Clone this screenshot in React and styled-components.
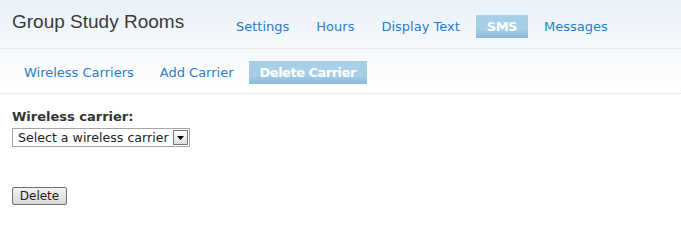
import styled, { createGlobalStyle } from "styled-components";

const GlobalStyle = createGlobalStyle`
  body {
    margin: 0;
    background: #fff;
    font-family: "DejaVu Sans", Verdana, sans-serif;
  }
`;

const topLinks = ["Settings", "Hours", "Display Text", "SMS", "Messages"];
const subLinks = ["Wireless Carriers", "Add Carrier", "Delete Carrier"];

const App = () => {
  return (
    <>
      <GlobalStyle />
      <Header>
        <Title>Group Study Rooms</Title>
        <TopNav>
          {topLinks.map((l) => (
            <Tab key={l} $active={l === "SMS"}>
              {l}
            </Tab>
          ))}
        </TopNav>
      </Header>
      <SubNav>
        {subLinks.map((l) => (
          <Tab key={l} $active={l === "Delete Carrier"}>
            {l}
          </Tab>
        ))}
      </SubNav>
      <Form>
        <Label>Wireless carrier:</Label>
        <SelectBox>
          <span>Select a wireless carrier</span>
          <Arrow>
            <svg width="7" height="4" viewBox="0 0 7 4">
              <path d="M0 0h7L3.5 4z" fill="#000" />
            </svg>
          </Arrow>
        </SelectBox>
        <Button>Delete</Button>
      </Form>
    </>
  );
};

export default App;

const Header = styled.div`
  height: 48px;
  display: flex;
  align-items: flex-start;
  padding-left: 12px;
  background: linear-gradient(#e8f0f8, #f6f9fc);
  border-bottom: 1px solid #e3eaf1;
`;

const Title = styled.h1`
  margin: 11px 0 0;
  font-family: "Liberation Sans", Arial, sans-serif;
  font-weight: normal;
  font-size: 19px;
  color: #3a3a3a;
  width: 210px;
`;

const TopNav = styled.div`
  display: flex;
  gap: 5px;
  margin-top: 15px;
  margin-left: 3px;
`;

const Tab = styled.span`
  display: inline-block;
  height: 23px;
  line-height: 23px;
  padding: 0 11px;
  font-size: 13px;
  color: ${(p) => (p.$active ? "#fff" : "#2a7ccc")};
  font-weight: ${(p) => (p.$active ? "bold" : "normal")};
  letter-spacing: ${(p) => (p.$active ? "-0.5px" : "0")};
  background: ${(p) =>
    p.$active ? "linear-gradient(#a7cfe8 60%, #88bade)" : "transparent"};
`;

const SubNav = styled.div`
  height: 45px;
  display: flex;
  align-items: flex-start;
  gap: 4px;
  padding: 12px 0 0 13px;
  box-sizing: border-box;
  background: linear-gradient(#f6f9fc, #fff);
  border-bottom: 1px solid #e8eef3;
`;

const Form = styled.div`
  padding: 14px 12px;
  display: flex;
  flex-direction: column;
  align-items: flex-start;
`;

const Label = styled.div`
  font-size: 13px;
  font-weight: bold;
  color: #333;
  line-height: 17px;
`;

const SelectBox = styled.div`
  margin-top: 3px;
  width: 178px;
  height: 19px;
  box-sizing: border-box;
  border: 1px solid #a5a5a5;
  display: flex;
  align-items: center;
  justify-content: space-between;
  padding: 0 1px 0 5px;
  font-size: 12.6px;
  color: #222;
`;

const Arrow = styled.span`
  width: 15px;
  height: 15px;
  box-sizing: border-box;
  border: 1px solid #777;
  background: linear-gradient(#fff, #ddd);
  display: flex;
  align-items: center;
  justify-content: center;
`;

const Button = styled.button`
  margin-top: 40px;
  width: 55px;
  height: 18px;
  padding: 0;
  font-family: "DejaVu Sans", Verdana, sans-serif;
  font-size: 12px;
  color: #222;
  border: 1px solid #707070;
  border-radius: 2px;
  background: linear-gradient(#f2f2f2, #d8d8d8);
`;
